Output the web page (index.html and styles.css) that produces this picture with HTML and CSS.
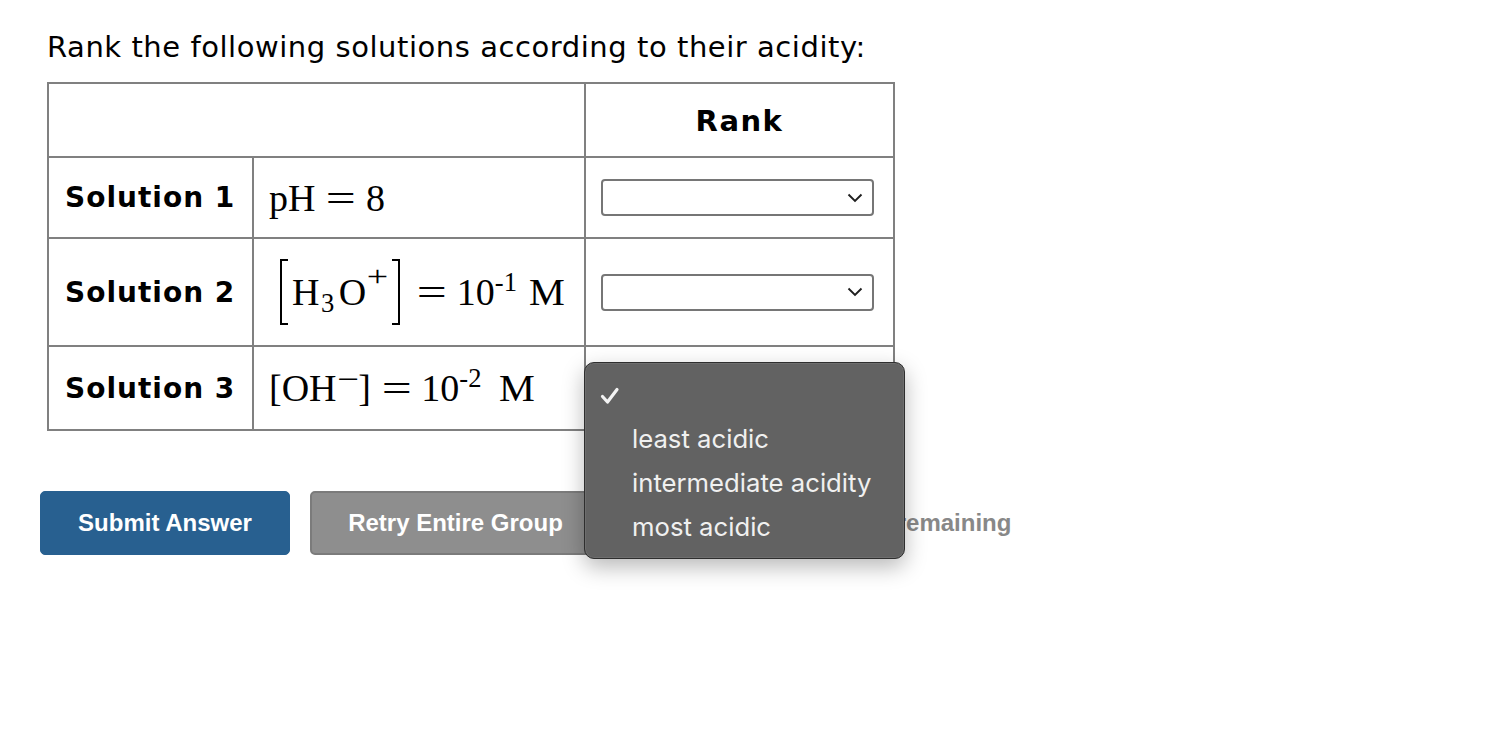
FILE: index.html
```html
<!DOCTYPE html>
<html lang="en">
<head>
<meta charset="utf-8">
<title>Rank solutions by acidity</title>
<link rel="stylesheet" href="styles.css">
</head>
<body>
<div class="page">
  <p class="prompt">Rank the following solutions according to their acidity:</p>
  <table class="rank-table">
    <colgroup><col class="c1"><col class="c2"><col class="c3"></colgroup>
    <tr class="row-head">
      <td colspan="2"></td>
      <th class="rank-head">Rank</th>
    </tr>
    <tr class="row-1">
      <th class="label">Solution 1</th>
      <td class="math-cell"><div class="math">pH<span class="eq">=</span>8</div></td>
      <td class="sel-cell"><div class="select"><svg class="chev" viewBox="0 0 16 10" width="16" height="10"><path d="M1.5 1.5 L8 8 L14.5 1.5" fill="none" stroke="#1f1f1f" stroke-width="1.9"/></svg></div></td>
    </tr>
    <tr class="row-2">
      <th class="label">Solution 2</th>
      <td class="math-cell">
        <div class="math math-flex">
          <span class="big-br left"></span>
          <span class="ion">H<sub>3</sub>O<sup class="plus">+</sup></span>
          <span class="big-br right"></span>
          <span class="rhs"><span class="eq">=</span>10<sup class="exp">-1</sup><span class="unit">M</span></span>
        </div>
      </td>
      <td class="sel-cell"><div class="select"><svg class="chev" viewBox="0 0 16 10" width="16" height="10"><path d="M1.5 1.5 L8 8 L14.5 1.5" fill="none" stroke="#1f1f1f" stroke-width="1.9"/></svg></div></td>
    </tr>
    <tr class="row-3">
      <th class="label">Solution 3</th>
      <td class="math-cell"><div class="math">[OH<sup class="minus">−</sup>]<span class="eq">=</span>10<sup class="exp">-2</sup><span class="unit">M</span></div></td>
      <td class="sel-cell"><div class="select"><svg class="chev" viewBox="0 0 16 10" width="16" height="10"><path d="M1.5 1.5 L8 8 L14.5 1.5" fill="none" stroke="#1f1f1f" stroke-width="1.9"/></svg></div></td>
    </tr>
  </table>
  <div class="actions">
    <button class="btn primary">Submit Answer</button>
    <button class="btn secondary">Retry Entire Group</button>
    <span class="remaining">7 more group attempts remaining</span>
  </div>

  <div class="menu">
    <div class="menu-item checked"><svg class="check" viewBox="0 0 20 18" width="20" height="18"><path d="M2.5 9.5 L7.5 15 L17 2.5" fill="none" stroke="#f4f4f4" stroke-width="3.2" stroke-linecap="round" stroke-linejoin="round"/></svg></div>
    <div class="menu-item">least acidic</div>
    <div class="menu-item">intermediate acidity</div>
    <div class="menu-item">most acidic</div>
  </div>
</div>
</body>
</html>
```

FILE: styles.css
```css
html, body {
  margin: 0;
  padding: 0;
  background: #ffffff;
}

.page {
  position: relative;
  min-height: 700px;
  padding: 32px 40px 0 40px;
  font-family: "DejaVu Sans", Verdana, sans-serif;
  color: #000;
}

.prompt {
  margin: 0 0 20px 7px;
  font-size: 29px;
  line-height: 30px;
  letter-spacing: 0.55px;
  white-space: nowrap;
}

.rank-table {
  margin-left: 7px;
  border-collapse: collapse;
  table-layout: fixed;
  width: 846px;
}

.c1 { width: 205px; }
.c2 { width: 332px; }
.c3 { width: 309px; }

.rank-table td,
.rank-table th {
  border: 2px solid #808080;
  padding: 0;
  vertical-align: middle;
}

.row-head { height: 74px; }
.row-1 { height: 81px; }
.row-2 { height: 108px; }
.row-3 { height: 84px; }

.rank-head {
  font-size: 29px;
  font-weight: bold;
  text-align: center;
  letter-spacing: 1.5px;
  padding-top: 2px !important;
}

.label {
  font-size: 28px;
  font-weight: bold;
  text-align: left;
  padding-left: 16px !important;
  letter-spacing: 1px;
  white-space: nowrap;
}

.math-cell {
  padding-left: 15px !important;
}

.math {
  font-family: "Liberation Serif", "Times New Roman", serif;
  font-size: 38px;
  line-height: 44px;
  white-space: nowrap;
}

.math-flex {
  display: flex;
  align-items: center;
  padding-left: 11px;
}

.eq {
  display: inline-block;
  margin: 0 14px 0 15px;
  transform: scaleX(1.4);
}

.rhs {
  margin-left: 6px;
}

.unit {
  display: inline-block;
  margin-left: 17px;
  transform: scaleX(1.06);
  transform-origin: left center;
}

.rhs .unit {
  margin-left: 12px;
}

.math sup,
.math sub {
  font-size: 0.7em;
  line-height: 0;
}

.math sup.exp {
  vertical-align: 0.52em;
}

.math sup.plus {
  display: inline-block;
  vertical-align: 0.64em;
  margin-left: 2px;
  font-size: 0.8em;
  transform: scaleX(1.25);
}

.math sup.minus {
  display: inline-block;
  vertical-align: 0.42em;
  margin: 0 2px 0 3px;
  font-size: 0.78em;
  transform: scaleX(1.3);
}

.math sub {
  vertical-align: -0.25em;
  margin: 0 4px 0 1px;
}

.ion {
  letter-spacing: 0.5px;
}

.big-br {
  display: inline-block;
  width: 6px;
  height: 62px;
  border: 2px solid #000;
}

.big-br.left {
  border-right: none;
  margin-right: 4px;
}

.big-br.right {
  border-left: none;
  margin-left: 6px;
}

.sel-cell {
  padding-left: 15px !important;
}

.select {
  box-sizing: border-box;
  width: 273px;
  height: 37px;
  border: 2px solid #767676;
  border-radius: 4px;
  background: #fff;
  display: flex;
  align-items: center;
  justify-content: flex-end;
  padding-right: 9px;
}

.chev {
  display: block;
}

.actions {
  display: flex;
  align-items: center;
  margin-top: 60px;
  font-family: "Liberation Sans", Arial, Helvetica, sans-serif;
}

.btn {
  height: 64px;
  border-radius: 5px;
  font-family: "Liberation Sans", Arial, Helvetica, sans-serif;
  font-weight: bold;
  font-size: 24px;
  color: #fff;
  box-sizing: border-box;
  padding: 0;
}

.btn.primary {
  background: #286090;
  border: 1px solid #286090;
  width: 250px;
}

.btn.secondary {
  margin-left: 20px;
  background: #8e8e8e;
  border: 2px solid #7b7b7b;
  width: 291px;
}

.remaining {
  margin-left: 29px;
  font-size: 24px;
  font-weight: bold;
  color: #888888;
}

.menu {
  position: absolute;
  z-index: 10;
  left: 584px;
  top: 362px;
  width: 321px;
  height: 197px;
  box-sizing: border-box;
  padding: 10px 0 8px 0;
  background: #626262;
  border: 1px solid #2e2e2e;
  border-radius: 10px;
  box-shadow: 0 0 0 1px rgba(255,255,255,0.08) inset, 0 8px 22px rgba(0,0,0,0.28);
  font-family: Inter, "Liberation Sans", sans-serif;
  font-size: 25.7px;
  color: #f0f0f0;
}

.menu-item {
  height: 44px;
  line-height: 44px;
  padding-left: 47px;
  white-space: nowrap;
}

.menu-item.checked {
  position: relative;
}

.check {
  position: absolute;
  left: 15px;
  top: 14px;
}
```
